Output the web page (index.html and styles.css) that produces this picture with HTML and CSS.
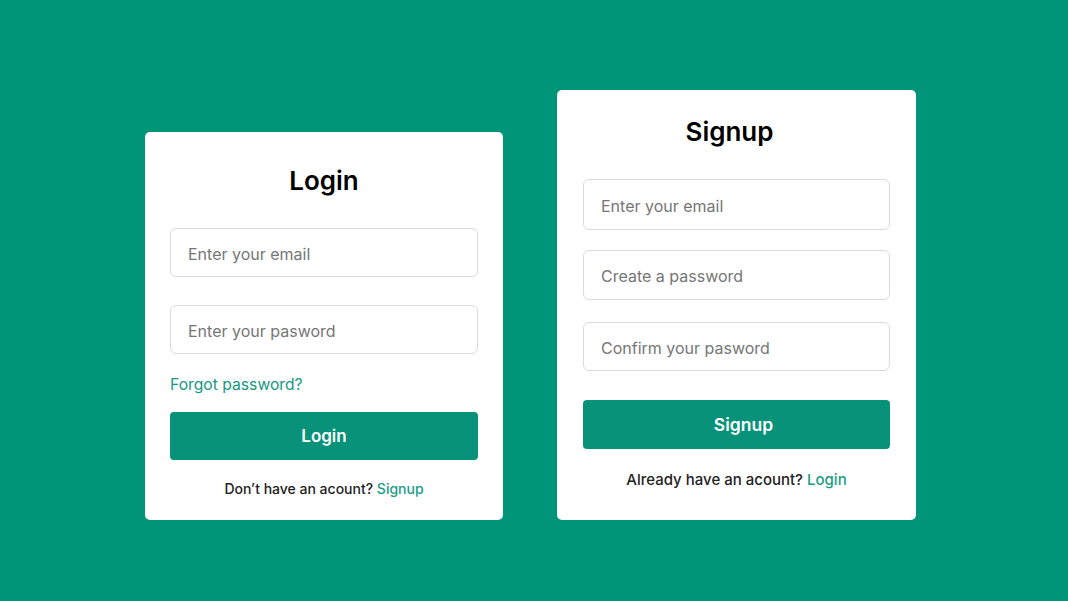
FILE: index.html
```html
<!DOCTYPE html>
<html lang="en">
<head>
<meta charset="utf-8">
<title>Login &amp; Signup</title>
<link rel="stylesheet" href="styles.css">
</head>
<body>
<main class="stage">
  <section class="card card-login">
    <h1 class="title">Login</h1>
    <input class="field field-first" type="email" placeholder="Enter your email">
    <input class="field field-gap-login" type="password" placeholder="Enter your pasword">
    <a class="forgot" href="#">Forgot password?</a>
    <button class="btn btn-login" type="button">Login</button>
    <p class="foot foot-login">Don’t have an acount? <a href="#" class="link">Signup</a></p>
  </section>
  <section class="card card-signup">
    <h1 class="title title-signup">Signup</h1>
    <input class="field field-first tall" type="email" placeholder="Enter your email">
    <input class="field field-gap-2" type="password" placeholder="Create a password">
    <input class="field field-gap-3" type="password" placeholder="Confirm your pasword">
    <button class="btn btn-signup" type="button">Signup</button>
    <p class="foot foot-signup">Already have an acount? <a href="#" class="link">Login</a></p>
  </section>
</main>
</body>
</html>
```
FILE: styles.css
```css
* { box-sizing: border-box; }
html, body { margin: 0; padding: 0; }
body {
  width: 1068px;
  height: 601px;
  background: #009578;
  font-family: Inter, "Open Sans", "Liberation Sans", sans-serif;
  overflow: hidden;
}
.stage {
  height: 601px;
  display: flex;
  justify-content: flex-start;
  align-items: flex-end;
  gap: 54px;
  padding-left: 145px;
  padding-bottom: 81px;
}
.card {
  width: 358px;
  background: #fff;
  border-radius: 5px;
  padding: 0 25px;
  display: flex;
  flex-direction: column;
}
.card-signup { width: 359px; padding: 26px 26px 30px 26px; }
.card-login { padding-top: 33px; padding-bottom: 21px; }
.title {
  margin: 0;
  font-size: 26px;
  line-height: 32px;
  font-weight: 600;
  color: #000;
  text-align: center;
}
.title-signup { padding-right: 14px; }
.field {
  display: block;
  width: 100%;
  height: 49px;
  border: 1px solid #dadada;
  border-radius: 6px;
  padding: 2px 0 0 17px;
  font-family: Inter, "Open Sans", sans-serif;
  font-size: 16px;
  color: #333;
  background: #fff;
  outline: none;
}
.field.tall { height: 51px; }
.field::placeholder { color: #767676; opacity: 1; }
.field-first { margin-top: 31px; }
.field-gap-login { margin-top: 28px; }
.field-gap-2 { margin-top: 20px; height: 50px; }
.field-gap-3 { margin-top: 22px; }
.forgot {
  margin-top: 21px;
  font-size: 15.7px;
  line-height: 20px;
  color: #16987e;
  text-decoration: none;
}
.btn {
  display: block;
  width: 100%;
  height: 48px;
  border: none;
  border-radius: 4px;
  background: #08927a;
  color: #fff;
  font-family: Inter, "Open Sans", sans-serif;
  font-size: 17px;
  font-weight: 600;
}
.btn-login { margin-top: 17px; }
.btn-signup { margin-top: 29px; height: 49px; padding-left: 20px; font-size: 17.5px; }
.foot {
  margin: 0;
  text-align: center;
  font-size: 14px;
  line-height: 20px;
  color: #222;
}
.foot-login { margin-top: 19px; font-weight: 500; }
.foot-signup { margin-top: 21px; font-weight: 500; font-size: 15px; }
.link { color: #1a9d85; text-decoration: none; }
```
